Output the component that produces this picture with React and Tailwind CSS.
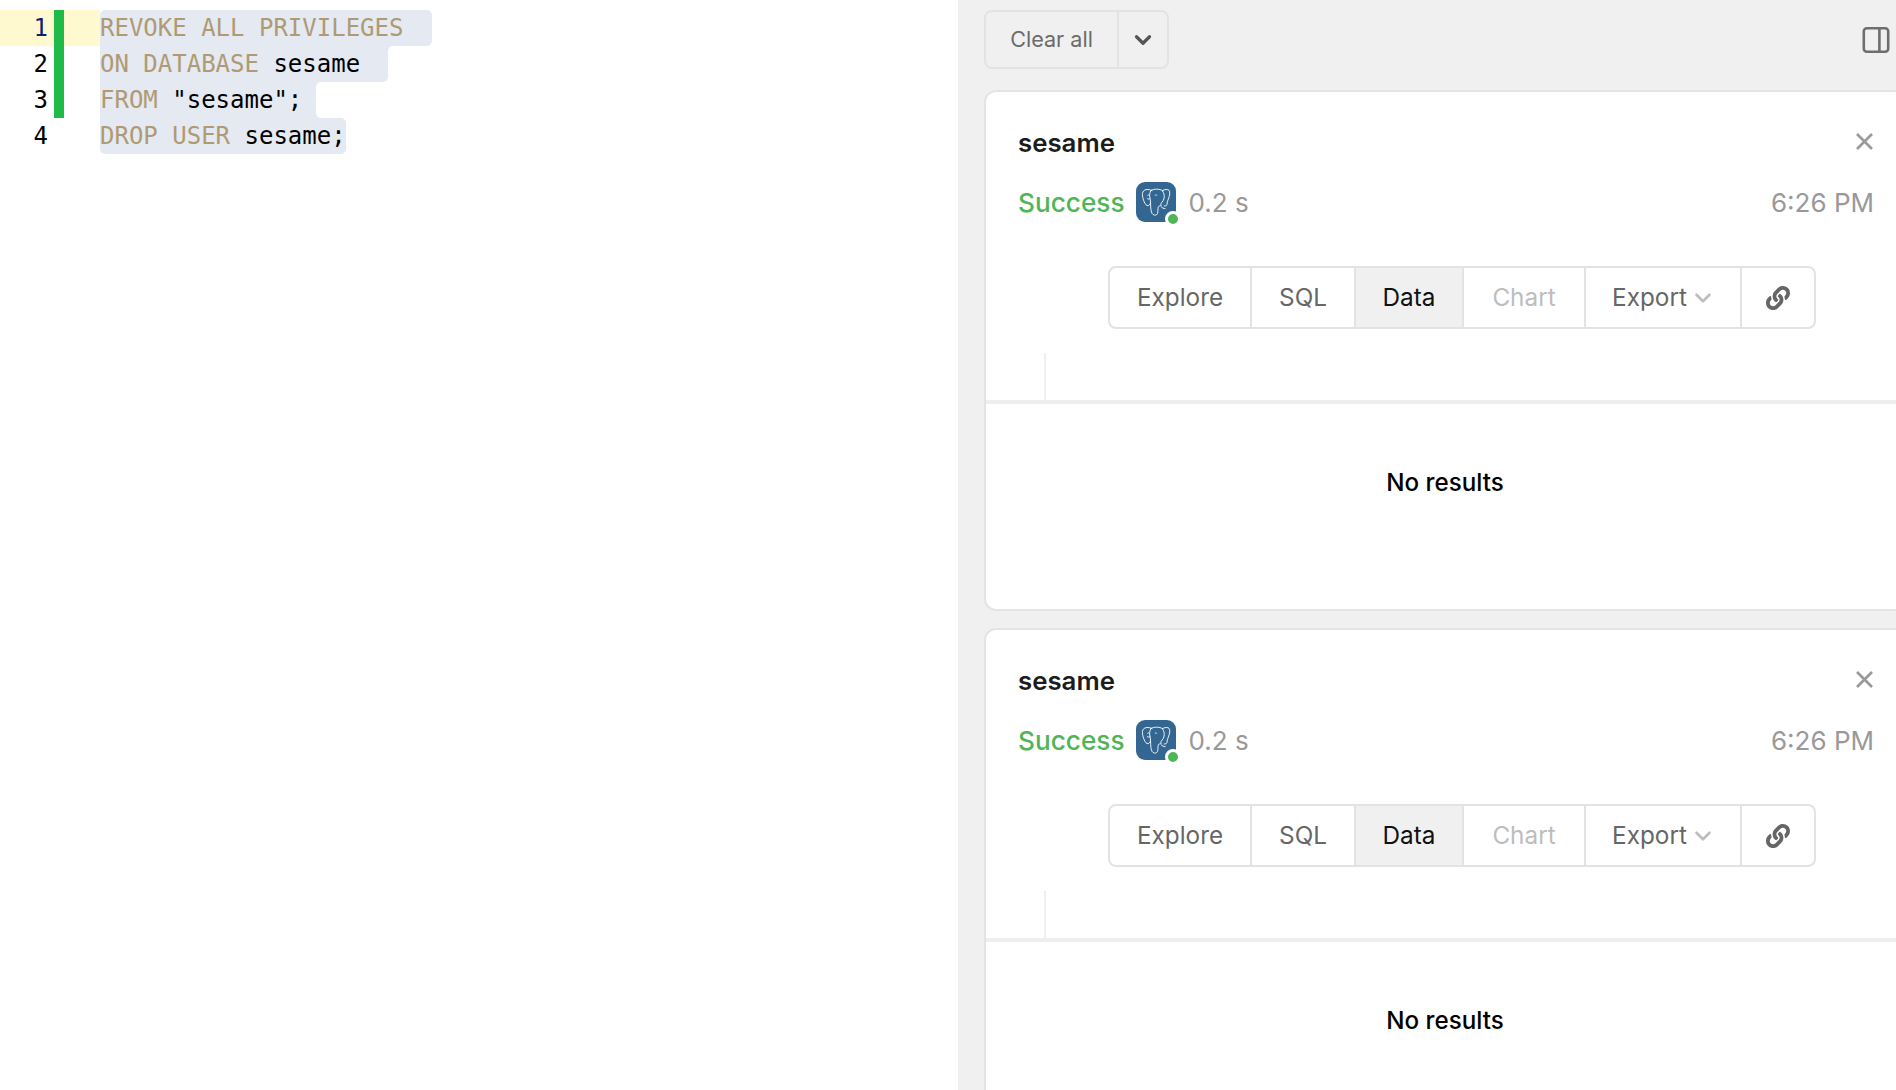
import React from "react";
import { ChevronDown } from "lucide-react";
import { FaLink } from "react-icons/fa";

const lines = [
  { n: 1, kw: "REVOKE ALL PRIVILEGES", rest: "", width: "w-[332px]", round: "rounded-t-[5px] rounded-br-[5px]", bar: true, active: true },
  { n: 2, kw: "ON DATABASE", rest: " sesame", width: "w-[288px]", round: "rounded-br-[5px]", bar: true, notchTop: true },
  { n: 3, kw: "FROM", rest: ' "sesame";', width: "w-[216px]", round: "", bar: true, notchTop: true, notchBottom: true },
  { n: 4, kw: "DROP USER", rest: " sesame;", width: "w-[246px]", round: "rounded-b-[5px] rounded-tr-[5px]", bar: false },
];

const ElephantIcon = () => (
  <svg viewBox="0 0 40 40" className="w-[40px] h-[40px]" fill="none" stroke="#ffffff" strokeWidth="0.9" strokeLinecap="round" strokeLinejoin="round">
    <path d="M16 8.5c-3.4-1.6-7-1.4-8.6.6-1.8 2.2-.8 7 .8 10.8 1 2.3 2.5 4 3.8 3.8 1-.2 1.6-1.2 2.2-2.2" />
    <path d="M15 8.4c1.8-.9 3.8-1.3 5.8-1.2 2.4 0 4.4.5 5.8 1.5" />
    <path d="M26.4 8.6c2.6-1.4 5.4-1.5 6.6-.3 1.5 1.4.6 5.4-.6 8.6-.8 2.2-1.4 3.6-1.4 5.3 0 1.2-.9 2-2.8 1.8" />
    <path d="M14.8 8.8c-1.3 2.2-1.5 4.9-.8 7.6.4 1.6.6 3.6.6 5.4 0 4.2.4 8 1.6 9.8 1 1.6 3.2 1.9 4.5 1 1.3-1.1 1.2-3.4 1.3-6 0-1.8.6-2.8 2.2-2.8" />
    <path d="M26.6 9c1.5 2.1 1.9 4.6 1.5 7-.3 1.9-1.1 3.3-2.2 4.3-1 1-1.3 2.1-.9 3.3" />
    <path d="M14 16.6c-1 .7-2.1.7-2.8 0M25 24.6c1.3 1.3 2.6 2.2 4.1 2" />
    <path d="M19.2 13c.5-.3 1.3-.2 1.5.2M11.6 13.2c.4-.4 1.1-.4 1.5 0" />
  </svg>
);

const PanelIcon = () => (
  <svg viewBox="0 0 28 28" className="w-[28px] h-[28px]" fill="none" stroke="#6e6e6e" strokeWidth="2.6">
    <rect x="1.8" y="2.2" width="24.4" height="23.6" rx="3" />
    <path d="M17.4 2.2v23.6" />
  </svg>
);

const CloseIcon = () => (
  <svg viewBox="0 0 17 17" className="w-[17px] h-[17px] mb-[3px]" fill="none" stroke="#999999" strokeWidth="2.7">
    <path d="M1 1l15 15M16 1L1 16" />
  </svg>
);

const Tab = ({ className = "", children }) => (
  <div className={`h-full flex items-center justify-center border-r-2 border-[#e3e3e3] ${className}`}>{children}</div>
);

const ResultCard = () => (
  <div className="shrink-0 w-[922px] h-[521px] bg-white border-2 border-[#e4e4e4] rounded-[12px] flex flex-col">
    <div className="flex items-center justify-between h-[40px] mt-[31px] pl-[32px] pr-[31px]">
      <span className="text-[25.8px] font-semibold text-[#1c1c1c]">sesame</span>
      <CloseIcon />
    </div>
    <div className="flex items-center justify-between h-[40px] mt-[19px] pl-[32px] pr-[30px]">
      <div className="flex items-center">
        <span className="text-[26.2px] font-medium text-[#50b556] pt-[1px]">Success</span>
        <div className="relative ml-[11px] w-[40px] h-[40px] rounded-[9px] bg-[#336791]">
          <ElephantIcon />
          <span className="absolute right-[-5px] bottom-[-5px] w-[16px] h-[16px] rounded-full bg-[#50b556] border-[3px] border-white" />
        </div>
        <span className="ml-[13px] text-[26px] text-[#999999]">0.2 s</span>
      </div>
      <span className="text-[26px] text-[#999999]">6:26 PM</span>
    </div>
    <div className="flex h-[63px] mt-[44px] ml-[122px] w-[708px] border-2 border-[#e3e3e3] rounded-[8px] text-[24.3px] text-[#666666] overflow-hidden">
      <Tab className="w-[142px]">Explore</Tab>
      <Tab className="w-[104px]">SQL</Tab>
      <Tab className="w-[108px] bg-[#f0f0f0] text-[#111111]">Data</Tab>
      <Tab className="w-[122px] text-[#bdbdbd]">Chart</Tab>
      <Tab className="w-[156px] gap-[3px] pl-[2px]">
        Export
        <ChevronDown size={26} strokeWidth={2.4} className="text-[#bdbdbd]" />
      </Tab>
      <div className="flex-1 flex items-center justify-center">
        <FaLink size={24} className="text-[#666666]" />
      </div>
    </div>
    <div className="w-[2px] h-[47px] mt-[24px] ml-[58px] bg-[#efefef]" />
    <div className="h-[4px] bg-[#eeeeee]" />
    <div className="flex-1 flex justify-center pt-[64px]">
      <span className="text-[24.2px] font-[450] text-black leading-[30px]">No results</span>
    </div>
  </div>
);

export default function App() {
  return (
    <div className="w-[1896px] h-[1090px] flex overflow-hidden bg-white font-[Inter,sans-serif]">
      <div className="w-[958px] shrink-0 pt-[10px] font-['DejaVu_Sans_Mono',monospace] text-[24px]">
        {lines.map((line) => (
          <div key={line.n} className="flex h-[36px] leading-[36px] whitespace-pre">
            <div className={`w-[100px] shrink-0 flex ${line.active ? "bg-[#fff9d0]" : ""}`}>
              <span className={`w-[48px] text-right ${line.active ? "text-[#0b216f]" : "text-black"}`}>{line.n}</span>
              <span className={`ml-[6px] w-[10px] ${line.bar ? "bg-[#1fba47]" : ""}`} />
            </div>
            <div className={`relative ${line.width} bg-[#e4e9f2] ${line.round}`}>
              <span className="text-[#b09a73]">{line.kw}</span>
              <span className="text-black">{line.rest}</span>
              {line.notchTop && (
                <span className="absolute left-full top-0 w-[5px] h-[5px] bg-[#e4e9f2]">
                  <span className="block w-full h-full bg-white rounded-tl-[5px]" />
                </span>
              )}
              {line.notchBottom && (
                <span className="absolute left-full bottom-0 w-[5px] h-[5px] bg-[#e4e9f2]">
                  <span className="block w-full h-full bg-white rounded-bl-[5px]" />
                </span>
              )}
            </div>
          </div>
        ))}
      </div>
      <div className="flex-1 min-w-0 bg-[#f0f0f0] pl-[26px] pt-[10px] flex flex-col overflow-hidden">
        <div className="flex items-center justify-between shrink-0 h-[59px] pr-[6px]">
          <div className="flex h-full w-[185px] border-2 border-[#e3e3e3] rounded-[8px] text-[#6b6b6b]">
            <div className="w-[133px] flex items-center justify-center border-r-2 border-[#e3e3e3] text-[21.6px]">Clear all</div>
            <div className="flex-1 flex items-center justify-center">
              <ChevronDown size={26} strokeWidth={3} className="text-[#555555]" />
            </div>
          </div>
          <PanelIcon />
        </div>
        <div className="mt-[21px] flex flex-col gap-[17px]">
          <ResultCard />
          <ResultCard />
        </div>
      </div>
    </div>
  );
}
